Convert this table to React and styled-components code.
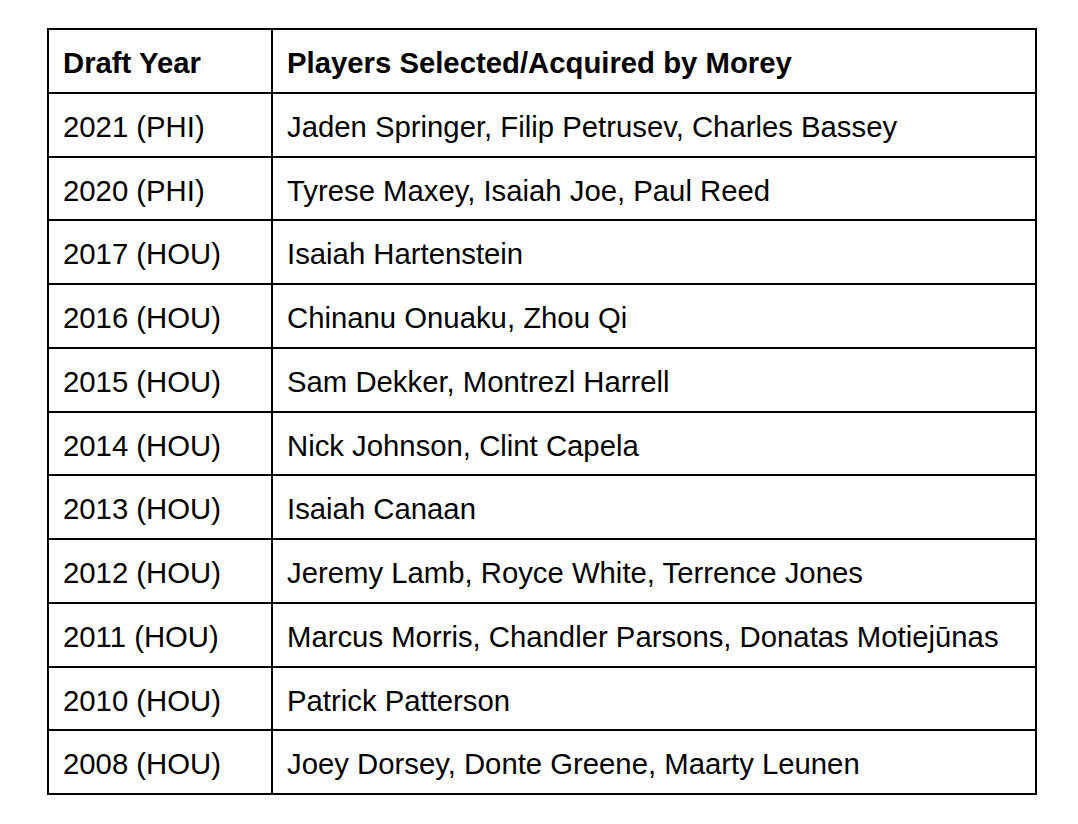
import React from "react";
import styled, { createGlobalStyle } from "styled-components";

const Global = createGlobalStyle`
  html, body { margin: 0; padding: 0; background: #ffffff; }
  body { font-family: "Liberation Sans", Arial, sans-serif; color: #000; }
`;

const Page = styled.div`
  padding: 28px 0 0 47px;
`;

const Table = styled.div`
  width: 990px;
  box-sizing: border-box;
  display: grid;
  grid-template-columns: 224px 764px;
  grid-auto-rows: 63.75px;
  border-top: 2px solid #000;
  border-left: 2px solid #000;
`;

const Cell = styled.div`
  box-sizing: border-box;
  display: flex;
  align-items: center;
  padding: 4px 0 0 14px;
  border-right: 2px solid #000;
  border-bottom: 2px solid #000;
  font-size: 29.3px;
  font-weight: ${(p) => (p.$head ? 700 : 400)};
  white-space: nowrap;
  line-height: 1;
`;

const rows = [
  ["2021 (PHI)", "Jaden Springer, Filip Petrusev, Charles Bassey"],
  ["2020 (PHI)", "Tyrese Maxey, Isaiah Joe, Paul Reed"],
  ["2017 (HOU)", "Isaiah Hartenstein"],
  ["2016 (HOU)", "Chinanu Onuaku, Zhou Qi"],
  ["2015 (HOU)", "Sam Dekker, Montrezl Harrell"],
  ["2014 (HOU)", "Nick Johnson, Clint Capela"],
  ["2013 (HOU)", "Isaiah Canaan"],
  ["2012 (HOU)", "Jeremy Lamb, Royce White, Terrence Jones"],
  ["2011 (HOU)", "Marcus Morris, Chandler Parsons, Donatas Motiejūnas"],
  ["2010 (HOU)", "Patrick Patterson"],
  ["2008 (HOU)", "Joey Dorsey, Donte Greene, Maarty Leunen"],
];

export default function App() {
  return (
    <>
      <Global />
      <Page>
        <Table>
          <Cell $head>Draft Year</Cell>
          <Cell $head>Players Selected/Acquired by Morey</Cell>
          {rows.map(([y, p]) => (
            <React.Fragment key={y}>
              <Cell>{y}</Cell>
              <Cell>{p}</Cell>
            </React.Fragment>
          ))}
        </Table>
      </Page>
    </>
  );
}
